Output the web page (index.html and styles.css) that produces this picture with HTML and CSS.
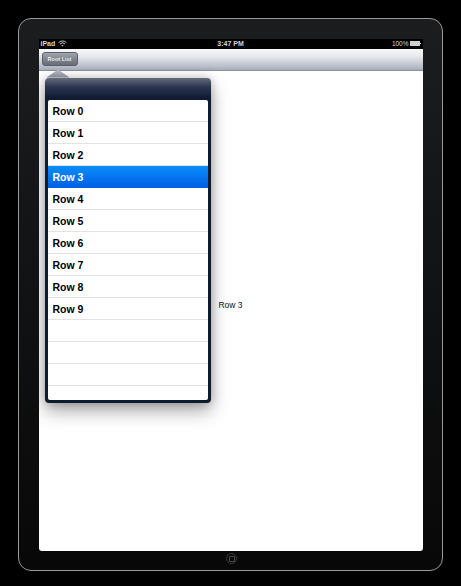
FILE: index.html
```html
<!DOCTYPE html>
<html>
<head>
<meta charset="utf-8">
<link rel="stylesheet" href="styles.css">
</head>
<body>
<div class="device">
  <div class="screen">
    <div class="status">
      <div class="st-left"><span>iPad</span>
        <svg class="wifi" width="9" height="7" viewBox="0 0 9 7"><path d="M0.6 2.6 A5.5 5.5 0 0 1 8.4 2.6" fill="none" stroke="#cfcfcf" stroke-width="1"/><path d="M2 4 A3.5 3.5 0 0 1 7 4" fill="none" stroke="#cfcfcf" stroke-width="1"/><path d="M3.4 5.4 A1.6 1.6 0 0 1 5.6 5.4 L4.5 6.6 Z" fill="#cfcfcf"/></svg>
      </div>
      <div class="st-mid">3:47 PM</div>
      <div class="st-right"><span>100%</span><span class="battery"><span class="cell"></span></span></div>
    </div>
    <div class="navbar">
      <div class="navbtn">Root List</div>
    </div>
    <div class="content">
      <div class="detail">Row 3</div>
    </div>
    <div class="popover">
      <div class="arrow"></div>
      <div class="list">
        <div class="row">Row 0</div>
        <div class="row">Row 1</div>
        <div class="row">Row 2</div>
        <div class="row selected">Row 3</div>
        <div class="row">Row 4</div>
        <div class="row">Row 5</div>
        <div class="row">Row 6</div>
        <div class="row">Row 7</div>
        <div class="row">Row 8</div>
        <div class="row">Row 9</div>
        <div class="row"></div>
        <div class="row"></div>
        <div class="row"></div>
        <div class="row"></div>
      </div>
    </div>
  </div>
  <div class="home"><span class="home-sq"></span></div>
</div>
</body>
</html>
```
FILE: styles.css
```css
html, body {
  margin: 0;
  padding: 0;
  background: #000;
  width: 461px;
  height: 586px;
  overflow: hidden;
  font-family: "Liberation Sans", Arial, sans-serif;
}
.device {
  position: relative;
  margin: 18px 0 0 18px;
  border: 1.5px solid #9a9a9a;
  border-radius: 13px;
  background: linear-gradient(#1c1d1f 0, #131416 40%, #080808 100%);
  padding: 19.5px 18.5px 0 19.5px;
  box-sizing: border-box;
  width: 425px;
  height: 553px;
}
.screen {
  position: relative;
  width: 384px;
  height: 512px;
  background: #fff;
  border-radius: 0 0 3px 3px;
  display: flex;
  flex-direction: column;
  overflow: hidden;
}
.status {
  height: 10px;
  background: #000;
  display: flex;
  align-items: center;
  justify-content: space-between;
  color: #d6d6d6;
  font-size: 7px;
  font-weight: bold;
  padding: 0 2px;
  position: relative;
}
.st-left {
  display: flex;
  align-items: center;
  gap: 3px;
}
.wifi { display: block; }
.st-mid {
  position: absolute;
  left: 0;
  right: 0;
  text-align: center;
  top: 1px;
}
.st-right {
  display: flex;
  align-items: center;
  gap: 1px;
  font-weight: normal;
  font-size: 6.5px;
}
.battery {
  width: 10px;
  height: 5px;
  border: 1px solid #cfcfcf;
  box-sizing: border-box;
  position: relative;
  display: inline-block;
  margin-right: 1px;
}
.battery::after {
  content: "";
  position: absolute;
  right: -2px;
  top: 1px;
  width: 1px;
  height: 1px;
  background: #cfcfcf;
}
.cell {
  display: block;
  width: 100%;
  height: 100%;
  background: #cfcfcf;
}
.navbar {
  height: 22px;
  background: linear-gradient(#f7f8fa 0, #e6e8ec 35%, #bcc1cb 80%, #a6acb9 100%);
  border-bottom: 1px solid #8b909a;
  box-sizing: border-box;
  display: flex;
  align-items: center;
  padding-left: 3px;
}
.navbtn {
  height: 14px;
  width: 36px;
  box-sizing: border-box;
  border-radius: 3px;
  border: 1px solid #5a5f68;
  background: linear-gradient(#a0a5ae 0, #80868f 50%, #676d77 100%);
  color: #fff;
  font-size: 5.5px;
  font-weight: bold;
  display: flex;
  align-items: center;
  justify-content: center;
  text-shadow: 0 -0.5px 0 #444;
}
.content {
  flex: 1;
  display: flex;
  align-items: center;
  justify-content: center;
  padding-bottom: 12px;
}
.detail {
  font-size: 8.5px;
  color: #111;
}
.popover {
  position: absolute;
  left: 6px;
  top: 39px;
  width: 166px;
  height: 325px;
  box-sizing: border-box;
  padding: 22px 3px 3px 3px;
  border-radius: 4px;
  background: linear-gradient(#646b7a 0, #2c3550 9px, #101b33 20px, #0f1a2e 100%);
  box-shadow: 0 8px 18px rgba(0,0,0,0.35), 0 0 10px rgba(0,0,0,0.2);
}
.arrow {
  position: absolute;
  left: 2px;
  top: -8px;
  width: 23px;
  height: 8px;
  background: linear-gradient(#b9bdc5, #7c8290);
  clip-path: polygon(50% 0, 100% 100%, 0 100%);
}
.list {
  background: #fff;
  height: 100%;
  border-radius: 2px;
  overflow: hidden;
}
.row {
  height: 22px;
  box-sizing: border-box;
  border-bottom: 1px solid #e3e3e3;
  font-size: 10.5px;
  font-weight: bold;
  color: #000;
  display: flex;
  align-items: center;
  padding: 1px 0 0 5px;
}
.row.selected {
  background: linear-gradient(#0a8df6 0, #0577f0 50%, #0160e6 100%);
  color: #fff;
  border-bottom-color: #0160e6;
}
.home {
  position: absolute;
  left: 207px;
  bottom: 6px;
  width: 11px;
  height: 11px;
  box-sizing: border-box;
  border-radius: 50%;
  border: 1px solid #3c3c3c;
  display: flex;
  align-items: center;
  justify-content: center;
}
.home-sq {
  width: 4px;
  height: 4px;
  border: 1px solid #4a4a4a;
  border-radius: 1px;
}
```
